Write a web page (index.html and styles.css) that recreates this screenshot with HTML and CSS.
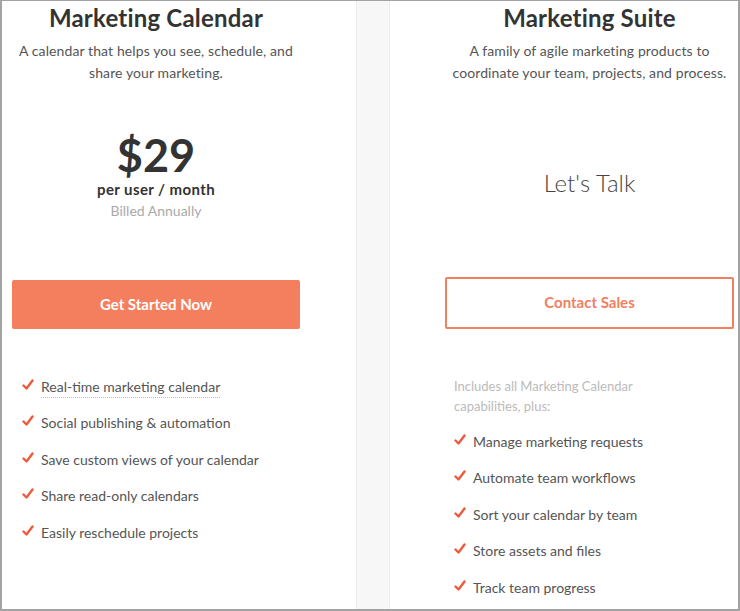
FILE: index.html
```html
<!DOCTYPE html>
<html lang="en">
<head>
<meta charset="utf-8">
<title>Pricing</title>
<link rel="stylesheet" href="styles.css">
</head>
<body>
<div class="frame">
  <section class="card card-left">
    <h2 class="title">Marketing Calendar</h2>
    <p class="subtitle">A calendar that helps you see, schedule, and<br>share your marketing.</p>
    <div class="price">$29</div>
    <div class="per">per user / month</div>
    <div class="billed">Billed Annually</div>
    <a class="btn btn-fill" href="#">Get Started Now</a>
    <ul class="features features-left">
      <li><svg class="check" viewBox="0 0 12 12"><path d="M1.5 6.5 L4.5 9.5 L10.5 1.5"/></svg><span class="dotted">Real-time marketing calendar</span></li>
      <li><svg class="check" viewBox="0 0 12 12"><path d="M1.5 6.5 L4.5 9.5 L10.5 1.5"/></svg><span>Social publishing &amp; automation</span></li>
      <li><svg class="check" viewBox="0 0 12 12"><path d="M1.5 6.5 L4.5 9.5 L10.5 1.5"/></svg><span>Save custom views of your calendar</span></li>
      <li><svg class="check" viewBox="0 0 12 12"><path d="M1.5 6.5 L4.5 9.5 L10.5 1.5"/></svg><span>Share read-only calendars</span></li>
      <li><svg class="check" viewBox="0 0 12 12"><path d="M1.5 6.5 L4.5 9.5 L10.5 1.5"/></svg><span>Easily reschedule projects</span></li>
    </ul>
  </section>
  <div class="gutter"></div>
  <section class="card card-right">
    <h2 class="title">Marketing Suite</h2>
    <p class="subtitle">A family of agile marketing products to<br>coordinate your team, projects, and process.</p>
    <div class="talk">Let's Talk</div>
    <a class="btn btn-outline" href="#">Contact Sales</a>
    <p class="includes">Includes all Marketing Calendar<br>capabilities, plus:</p>
    <ul class="features features-right">
      <li><svg class="check" viewBox="0 0 12 12"><path d="M1.5 6.5 L4.5 9.5 L10.5 1.5"/></svg><span>Manage marketing requests</span></li>
      <li><svg class="check" viewBox="0 0 12 12"><path d="M1.5 6.5 L4.5 9.5 L10.5 1.5"/></svg><span>Automate team workflows</span></li>
      <li><svg class="check" viewBox="0 0 12 12"><path d="M1.5 6.5 L4.5 9.5 L10.5 1.5"/></svg><span>Sort your calendar by team</span></li>
      <li><svg class="check" viewBox="0 0 12 12"><path d="M1.5 6.5 L4.5 9.5 L10.5 1.5"/></svg><span>Store assets and files</span></li>
      <li><svg class="check" viewBox="0 0 12 12"><path d="M1.5 6.5 L4.5 9.5 L10.5 1.5"/></svg><span>Track team progress</span></li>
    </ul>
  </section>
</div>
</body>
</html>
```
FILE: styles.css
```css
* { box-sizing: border-box; }
html, body { margin: 0; padding: 0; background: #fff; }
body { font-family: Lato, "Open Sans", "Liberation Sans", sans-serif; color: #555; }

.frame {
  width: 740px;
  height: 611px;
  display: flex;
  border-top: 1px solid #a3a3a3;
  border-left: 2px solid #a3a3a3;
  border-right: 2px solid #a3a3a3;
  border-bottom: 2px solid #a3a3a3;
  overflow: hidden;
}

.card {
  display: flex;
  flex-direction: column;
  background: #fff;
  padding-top: 2px;
}
.card-left { width: 355px; padding-left: 10px; padding-right: 56px; border-right: 1px solid #ececec; }
.card-right { flex: 1; padding-left: 55px; padding-right: 4px; border-left: 1px solid #ececec; }

.gutter { width: 32px; background: #f7f7f7; }

.title {
  margin: 0;
  font-size: 24px;
  line-height: 30px;
  font-weight: 700;
  color: #333;
  text-align: center;
  letter-spacing: 0.2px;
}
.subtitle {
  margin: 7px 0 0;
  font-size: 14px;
  line-height: 22px;
  color: #555;
  text-align: center;
  letter-spacing: 0.1px;
}

.price {
  margin-top: 46px;
  font-size: 45px;
  line-height: 50px;
  font-weight: 700;
  color: #333;
  text-align: center;
}
.per {
  font-size: 15px;
  line-height: 18px;
  font-weight: 700;
  color: #333;
  text-align: center;
  letter-spacing: 0.4px;
}
.billed {
  margin-top: 3px;
  font-size: 14px;
  line-height: 20px;
  color: #aaa;
  text-align: center;
}

.talk {
  margin-top: 84px;
  font-size: 24px;
  line-height: 30px;
  font-weight: 300;
  color: #444;
  text-align: center;
}

.btn {
  display: flex;
  align-items: center;
  justify-content: center;
  font-size: 15px;
  font-weight: 700;
  text-decoration: none;
  border-radius: 2px;
}
.btn-fill {
  margin-top: 59px;
  height: 49px;
  padding-bottom: 1px;
  background: #f47f5e;
  color: #fff;
}
.btn-outline {
  margin-top: 79px;
  height: 52px;
  padding-bottom: 2px;
  border: 2px solid #f0805f;
  color: #f0805f;
}

.includes {
  margin: 47px 0 0 9px;
  font-size: 13px;
  line-height: 20px;
  color: #bbb;
}

.features {
  list-style: none;
  margin: 0;
  padding: 0 0 0 10px;
  display: flex;
  flex-direction: column;
  gap: 14.6px;
}
.features-left { margin-top: 46px; }
.features-right { margin-top: 14px; padding-left: 9px; }
.features li {
  display: flex;
  align-items: center;
  height: 22px;
  font-size: 14px;
  color: #555;
}
.check {
  width: 12px;
  height: 12px;
  margin-right: 7px;
  margin-top: -3px;
  fill: none;
  stroke: #f05a3c;
  stroke-width: 2.4;
  stroke-linecap: round;
  stroke-linejoin: round;
}
.dotted {
  border-bottom: 1px dotted #bbb;
  line-height: 20px;
  margin-top: 2px;
}
```
